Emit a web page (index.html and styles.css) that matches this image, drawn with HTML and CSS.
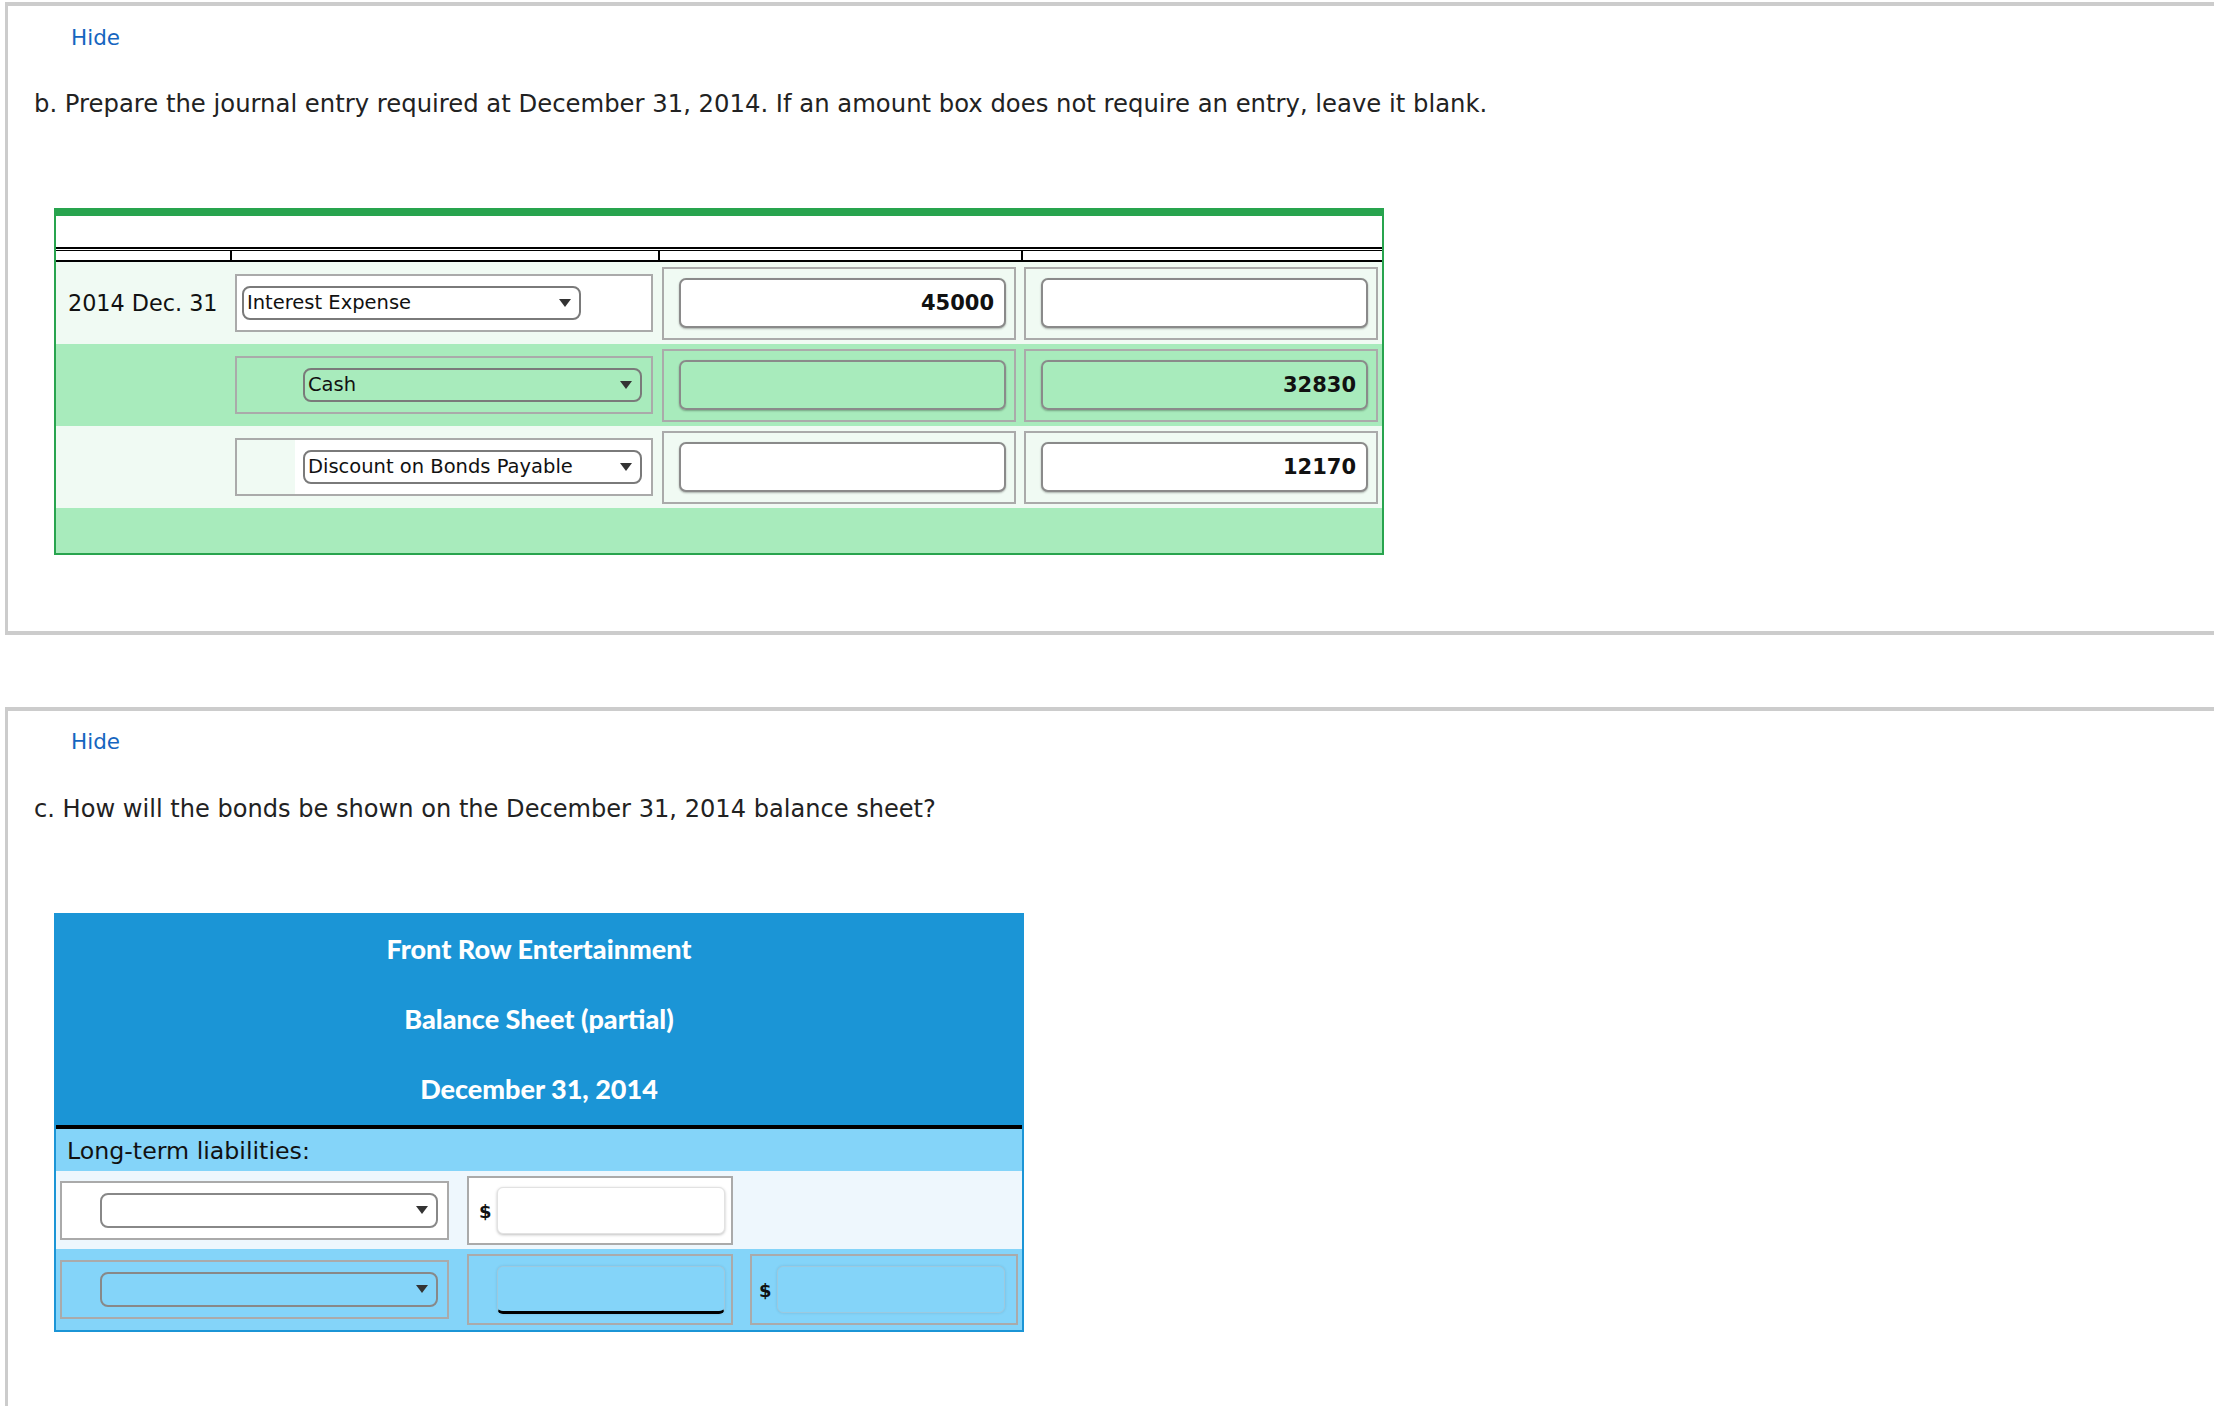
FILE: index.html
```html
<!DOCTYPE html>
<html>
<head>
<meta charset="utf-8">
<title>Bonds</title>
<link rel="stylesheet" href="styles.css">
</head>
<body>
<div class="page">
  <section class="panel panel-b">
    <a class="hide">Hide</a>
    <p class="question q-b">b. Prepare the journal entry required at December 31, 2014. If an amount box does not require an entry, leave it blank.</p>
    <div class="journal">
      <div class="j-title"></div>
      <div class="j-rule"></div>
      <div class="j-head"><span></span><span></span><span></span><span></span></div>
      <div class="j-row light">
        <div class="j-date">2014 Dec. 31</div>
        <div class="j-acct"><div class="acct-box white"><div class="acct-fill first"><div class="select">Interest Expense<i class="arrow"></i></div></div></div></div>
        <div class="j-amt first-col"><div class="amt-box"><div class="amt-input">45000</div></div></div>
        <div class="j-amt"><div class="amt-box"><div class="amt-input"></div></div></div>
      </div>
      <div class="j-row green">
        <div class="j-date"></div>
        <div class="j-acct"><div class="acct-box"><div class="acct-fill indent"><div class="select">Cash<i class="arrow"></i></div></div></div></div>
        <div class="j-amt first-col"><div class="amt-box"><div class="amt-input"></div></div></div>
        <div class="j-amt"><div class="amt-box"><div class="amt-input">32830</div></div></div>
      </div>
      <div class="j-row light">
        <div class="j-date"></div>
        <div class="j-acct"><div class="acct-box"><div class="acct-fill indent white"><div class="select">Discount on Bonds Payable<i class="arrow"></i></div></div></div></div>
        <div class="j-amt first-col"><div class="amt-box"><div class="amt-input"></div></div></div>
        <div class="j-amt"><div class="amt-box"><div class="amt-input">12170</div></div></div>
      </div>
      <div class="j-foot"></div>
    </div>
  </section>

  <section class="panel panel-c">
    <a class="hide">Hide</a>
    <p class="question q-c">c. How will the bonds be shown on the December 31, 2014 balance sheet?</p>
    <div class="bs">
      <div class="bs-head">
        <div class="bs-title">Front Row Entertainment</div>
        <div class="bs-title">Balance Sheet (partial)</div>
        <div class="bs-title">December 31, 2014</div>
      </div>
      <div class="bs-label">Long-term liabilities:</div>
      <div class="bs-row pale">
        <div class="bs-cell"><div class="bs-sel-box white"><div class="select">&nbsp;<i class="arrow"></i></div></div></div>
        <div class="bs-cell"><div class="bs-amt-box mid white"><span class="dollar">$</span><div class="bs-input solid"></div></div></div>
        <div class="bs-cell"></div>
      </div>
      <div class="bs-row sky">
        <div class="bs-cell"><div class="bs-sel-box"><div class="select">&nbsp;<i class="arrow"></i></div></div></div>
        <div class="bs-cell"><div class="bs-amt-box mid tall"><span class="dollar ghost">$</span><div class="bs-input clear underline"></div></div></div>
        <div class="bs-cell"><div class="bs-amt-box last tall"><span class="dollar">$</span><div class="bs-input clear"></div></div></div>
      </div>
    </div>
  </section>
</div>
</body>
</html>
```

FILE: styles.css
```css
* { box-sizing: border-box; }
html, body { margin: 0; padding: 0; background: #fff; }
body {
  font-family: "DejaVu Sans", Verdana, sans-serif;
  color: #222;
  overflow: hidden;
}
.page { padding-top: 2px; padding-left: 5px; }

.panel {
  border-top: 4px solid #cccccc;
  border-left: 3px solid #cccccc;
}
.panel-b { border-bottom: 4px solid #cccccc; padding-bottom: 76px; padding-top: 19px; }
.panel-c { margin-top: 72px; padding-top: 18px; min-height: 900px; }

.hide {
  display: block;
  margin-left: 63px;
  font-size: 21.5px;
  line-height: 26px;
  color: #1565c0;
}
.question {
  margin: 39px 0 0 26px;
  line-height: 28px;
  color: #222;
}
.q-b { font-size: 24.3px; }
.q-c { font-size: 24.1px; margin-top: 40px; }

/* Journal */
.journal {
  margin: 90px 0 0 46px;
  width: 1330px;
  border: 2px solid #28a44e;
  border-top-width: 8px;
}
.j-title { height: 31px; background: #fff; }
.j-rule { height: 3px; border-top: 2px solid #000; background: #fff; }
.j-head, .j-row {
  display: grid;
  grid-template-columns: 174px 428px 363px 361px;
}
.j-head {
  height: 12px;
  border-top: 1px solid #000;
  border-bottom: 2px solid #000;
  background: #fff;
}
.j-head span + span { border-left: 2px solid #000; }
.j-row { height: 82px; align-items: center; }
.j-row.light { background: #f0faf3; }
.j-row.green { background: #a8ebbc; }
.j-date { padding-left: 12px; font-size: 22.3px; color: #111; }
.j-acct { padding: 0 5px; }
.acct-box {
  height: 58px;
  border: 2px solid #aaaaaa;
  display: flex;
}
.acct-box.white { background: #fff; }
.acct-fill { flex: 1; display: flex; align-items: center; }
.acct-fill.first { padding-left: 5px; }
.acct-fill.indent { margin-left: 58px; padding-left: 8px; }
.acct-fill.white { background: #fff; }

.select {
  position: relative;
  width: 339px;
  height: 34px;
  border: 2px solid #7a7a7a;
  border-radius: 8px;
  font-size: 19.5px;
  line-height: 30px;
  padding-left: 3px;
  color: #111;
  white-space: nowrap;
}
.arrow {
  position: absolute;
  right: 8px;
  top: 11px;
  width: 0;
  height: 0;
  border-left: 6px solid transparent;
  border-right: 6px solid transparent;
  border-top: 8px solid #333;
}

.j-amt { padding-left: 3px; }
.j-amt.first-col { padding-left: 4px; }
.amt-box {
  width: 354px;
  height: 73px;
  border: 2px solid #aaaaaa;
  display: flex;
  align-items: center;
  padding-left: 15px;
}
.amt-input {
  width: 327px;
  height: 50px;
  border: 2px solid #8a8a8a;
  border-radius: 7px;
  box-shadow: 0 1px 2px rgba(0,0,0,0.3);
  background: #fff;
  text-align: right;
  padding-right: 10px;
  font-size: 21px;
  font-weight: bold;
  line-height: 46px;
  color: #111;
}
.j-row.green .amt-input { background: transparent; }
.j-foot { height: 45px; background: #a8ebbc; }

/* Balance sheet */
.bs {
  margin: 90px 0 0 46px;
  width: 970px;
  border: 2px solid #1b95d6;
  border-top: 0;
}
.bs-head {
  background: #1b95d6;
  height: 212px;
  padding-top: 1px;
}
.bs-title {
  height: 70px;
  line-height: 70px;
  text-align: center;
  color: #fff;
  font-family: Lato, "Open Sans", sans-serif;
  font-weight: 900;
  font-size: 27px;
}
.bs-label {
  border-top: 4px solid #000;
  height: 46px;
  padding-top: 3px;
  padding-left: 11px;
  background: #84d4f9;
  font-size: 23.7px;
  line-height: 38px;
  color: #111;
}
.bs-row {
  display: grid;
  grid-template-columns: 402px 284px 280px;
  align-items: center;
}
.bs-row.pale { height: 78px; background: #eef7fd; }
.bs-row.sky { height: 81px; background: #84d4f9; }
.bs-sel-box {
  margin-left: 4px;
  width: 389px;
  height: 59px;
  border: 2px solid #aaaaaa;
  display: flex;
  align-items: center;
  padding-left: 38px;
}
.bs-sel-box .select { width: 338px; height: 35px; border-color: #888; }
.bs-amt-box {
  height: 69px;
  border: 2px solid #aaaaaa;
  display: flex;
  align-items: center;
}
.bs-amt-box.tall { height: 71px; }
.bs-amt-box.mid { margin-left: 9px; width: 266px; padding-left: 10px; }
.bs-amt-box.last { margin-left: 8px; width: 268px; padding-left: 7px; }
.white { background: #fff; }
.dollar {
  width: 18px;
  font-size: 18px;
  font-weight: bold;
  color: #111;
  padding-top: 2px;
}
.dollar.ghost { visibility: hidden; }
.bs-input {
  width: 228px;
  height: 47px;
  border-radius: 6px;
}
.bs-input.solid {
  background: #fff;
  border: 1px solid #e2e2e2;
  box-shadow: 0 1px 3px rgba(0,0,0,0.25);
}
.bs-input.clear {
  background: #84d4f9;
  border: 1px solid #9cc9df;
  box-shadow: 0 0 3px rgba(0,0,0,0.12);
}
.bs-input.underline { height: 48px; border-bottom: 3px solid #000; }
```
